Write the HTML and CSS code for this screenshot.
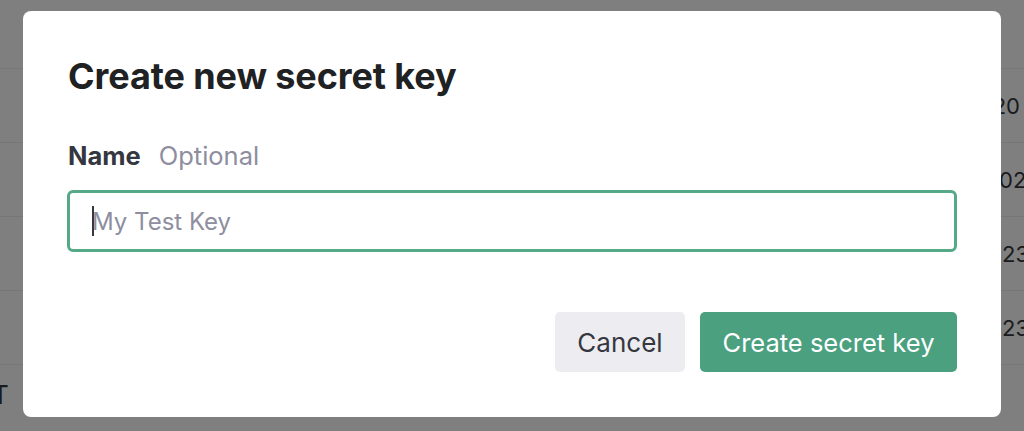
FILE: index.html
```html
<!DOCTYPE html>
<html lang="en">
<head>
<meta charset="utf-8">
<title>Create new secret key</title>
<link rel="stylesheet" href="styles.css">
</head>
<body>
<div class="page">
  <div class="rows">
    <div class="row r1"><span class="date">Jan 20</span></div>
    <div class="row r2"><span class="date">2023</span></div>
    <div class="row r3"><span class="date">2023</span></div>
    <div class="row r4"><span class="date">2023</span></div>
    <div class="row r5"><span class="stub">T</span></div>
  </div>
</div>
<div class="overlay">
  <div class="modal" role="dialog" aria-labelledby="title">
    <h2 class="title" id="title">Create new secret key</h2>
    <div class="field">
      <label class="label" for="keyname"><span class="label-main">Name</span><span class="label-opt">Optional</span></label>
      <div class="input-wrap">
        <span class="caret"></span>
        <input class="input" id="keyname" type="text" placeholder="My Test Key">
      </div>
    </div>
    <div class="actions">
      <button class="btn btn-neutral" type="button">Cancel</button>
      <button class="btn btn-primary" type="button">Create secret key</button>
    </div>
  </div>
</div>
</body>
</html>
```
FILE: styles.css
```css
* { box-sizing: border-box; }
html, body { margin: 0; padding: 0; height: 100%; }
body {
  width: 1024px;
  height: 431px;
  overflow: hidden;
  font-family: Inter, "Liberation Sans", Arial, sans-serif;
  background: #ffffff;
}
.page {
  height: 431px;
  background: #ffffff;
}
.rows {
  padding-top: 68px;
}
.row {
  height: 74px;
  border-top: 1px solid #ececf1;
  display: flex;
  align-items: center;
  justify-content: flex-end;
  font-size: 22px;
  color: #353740;
}
.r1 { padding-right: 4px; }
.r2 { margin-right: -16px; }
.r3 { margin-right: -5px; }
.r4 { margin-right: -5px; }
.r5 { justify-content: flex-start; align-items: flex-start; padding-top: 14px; }
.stub { margin-left: -8px; font-size: 26px; }

.overlay {
  position: fixed;
  inset: 0;
  background: rgba(0, 0, 0, 0.5);
  display: flex;
  align-items: center;
  justify-content: center;
  padding-bottom: 3px;
}
.modal {
  width: 978px;
  height: 406px;
  background: #ffffff;
  border-radius: 8px;
  padding: 43px 44px 0 45px;
  color: #202123;
}
.title {
  margin: 0;
  font-size: 36px;
  font-weight: 700;
  line-height: 44px;
  letter-spacing: -0.1px;
  color: #202123;
}
.field { margin-top: 43px; }
.label {
  display: flex;
  gap: 18px;
  font-size: 25.5px;
  line-height: 30px;
}
.label-main { font-weight: 700; color: #353740; }
.label-opt { color: #8e8ea0; }
.input-wrap {
  position: relative;
  margin-top: 19px;
  margin-left: -1px;
}
.input {
  display: block;
  width: 100%;
  height: 62px;
  border: 3px solid #55a987;
  border-radius: 6px;
  padding: 0 22px;
  font-family: inherit;
  font-size: 24px;
  color: #353740;
  outline: none;
  background: #fff;
}
.input::placeholder { color: #8e8ea0; }
.caret {
  position: absolute;
  left: 25px;
  top: 16px;
  width: 2px;
  height: 30px;
  background: #353740;
}
.actions {
  display: flex;
  justify-content: flex-end;
  gap: 15px;
  margin-top: 60px;
}
.btn {
  height: 60px;
  border: 0;
  border-radius: 5px;
  font-family: inherit;
  padding: 0 20px;
  cursor: pointer;
}
.btn-neutral {
  background: #ececf1;
  color: #353740;
  width: 130px;
  font-size: 26px;
}
.btn-primary {
  background: #4aa07f;
  color: #ffffff;
  width: 257px;
  font-size: 25.5px;
}
```
